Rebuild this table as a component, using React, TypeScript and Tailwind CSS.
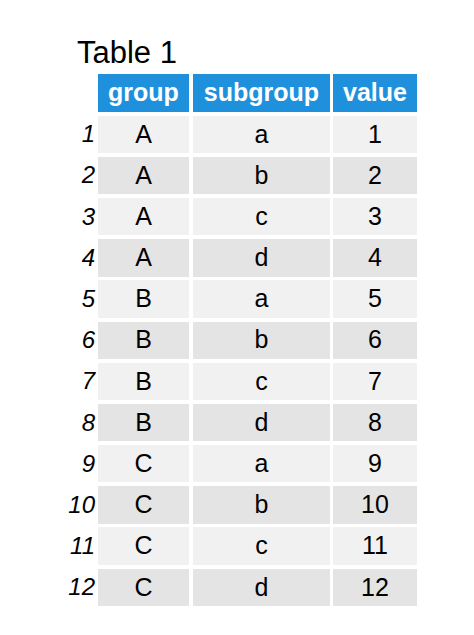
import React from "react";

const rows: [string, string, string][] = [
  ["A", "a", "1"],
  ["A", "b", "2"],
  ["A", "c", "3"],
  ["A", "d", "4"],
  ["B", "a", "5"],
  ["B", "b", "6"],
  ["B", "c", "7"],
  ["B", "d", "8"],
  ["C", "a", "9"],
  ["C", "b", "10"],
  ["C", "c", "11"],
  ["C", "d", "12"],
];

export default function App() {
  return (
    <div
      className="w-[474px] h-[635px] bg-white text-black"
      style={{ fontFamily: '"Liberation Sans", Arial, sans-serif' }}
    >
      <div className="pt-[37px] pl-[77px] text-[31px] leading-[31px]">Table 1</div>
      <div className="mt-[6.3px] ml-[60px] flex flex-col gap-[3.8px]">
        <div className="flex h-[37.5px] text-[25px] font-bold text-white">
          <div className="w-[38px]" />
          <div className="w-[91px] bg-[#1f91dc] flex items-center justify-center">group</div>
          <div className="ml-[4px] w-[137px] bg-[#1f91dc] flex items-center justify-center">subgroup</div>
          <div className="ml-[3px] w-[84px] bg-[#1f91dc] flex items-center justify-center">value</div>
        </div>
        {rows.map((r, i) => {
          const bg = i % 2 === 0 ? "bg-[#f1f1f1]" : "bg-[#e4e4e4]";
          return (
            <div key={i} className="flex h-[37.4px] text-[25px]">
              <div className="w-[38px] pr-[3px] flex items-center justify-end italic text-[24px]">{i + 1}</div>
              <div className={`w-[91px] ${bg} flex items-center justify-center`}>{r[0]}</div>
              <div className={`ml-[4px] w-[137px] ${bg} flex items-center justify-center`}>{r[1]}</div>
              <div className={`ml-[3px] w-[84px] ${bg} flex items-center justify-center`}>{r[2]}</div>
            </div>
          );
        })}
      </div>
    </div>
  );
}
